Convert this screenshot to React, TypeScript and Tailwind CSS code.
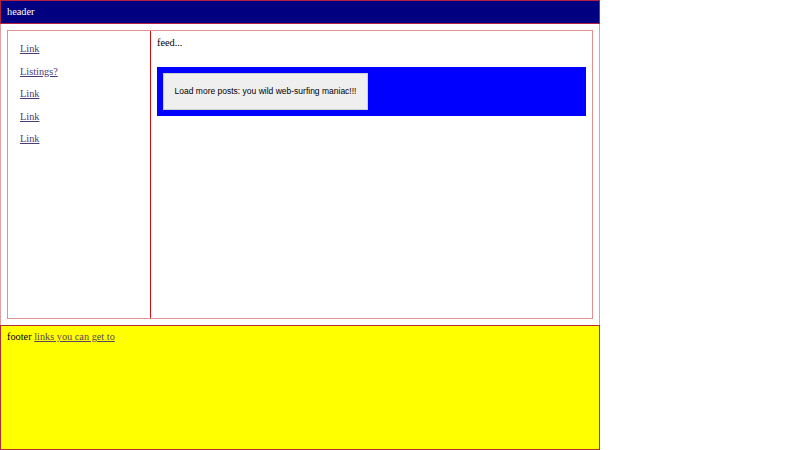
import React from 'react';

const links = ['Link', 'Listings?', 'Link', 'Link', 'Link'];

export default function App() {
  return (
    <div className="flex h-[450px] w-[600px] flex-col font-['Liberation_Serif',serif] text-[10.3px] text-black">
      <header className="flex h-[24px] shrink-0 items-center border border-[#b02040] bg-[#000080] px-[6px] text-white">
        header
      </header>
      <main className="flex h-[301px] shrink-0 border-x border-[#e0a0a0] px-[6px] pt-[6px] pb-[6px]">
        <div className="flex flex-1 border border-[#e09090]">
          <aside className="flex w-[143px] shrink-0 flex-col gap-[9.5px] border-r-[1.5px] border-[#d01010] pl-[12px] pt-[11px]">
            {links.map((label, index) => (
              <a key={index} href="#" className="leading-[13px] text-[#4b3b78] underline">
                {label}
              </a>
            ))}
          </aside>
          <section className="flex flex-1 flex-col px-[6px] pt-[5px]">
            <span className="leading-[13px]">feed...</span>
            <div className="mt-[18px] bg-[#0000ff] p-[6px]">
              <button className="h-[37px] w-[205px] border border-[#cfcfcf] bg-[#efefef] font-['Liberation_Sans',sans-serif] text-[8.5px] text-black">
                Load more posts: you wild web-surfing maniac!!!
              </button>
            </div>
          </section>
        </div>
      </main>
      <footer className="flex-1 border border-[#b03030] bg-[#ffff00] px-[6px] pt-[3px]">
        footer{' '}
        <a href="#" className="text-[#5a4a5a] underline">
          links you can get to
        </a>
      </footer>
    </div>
  );
}
